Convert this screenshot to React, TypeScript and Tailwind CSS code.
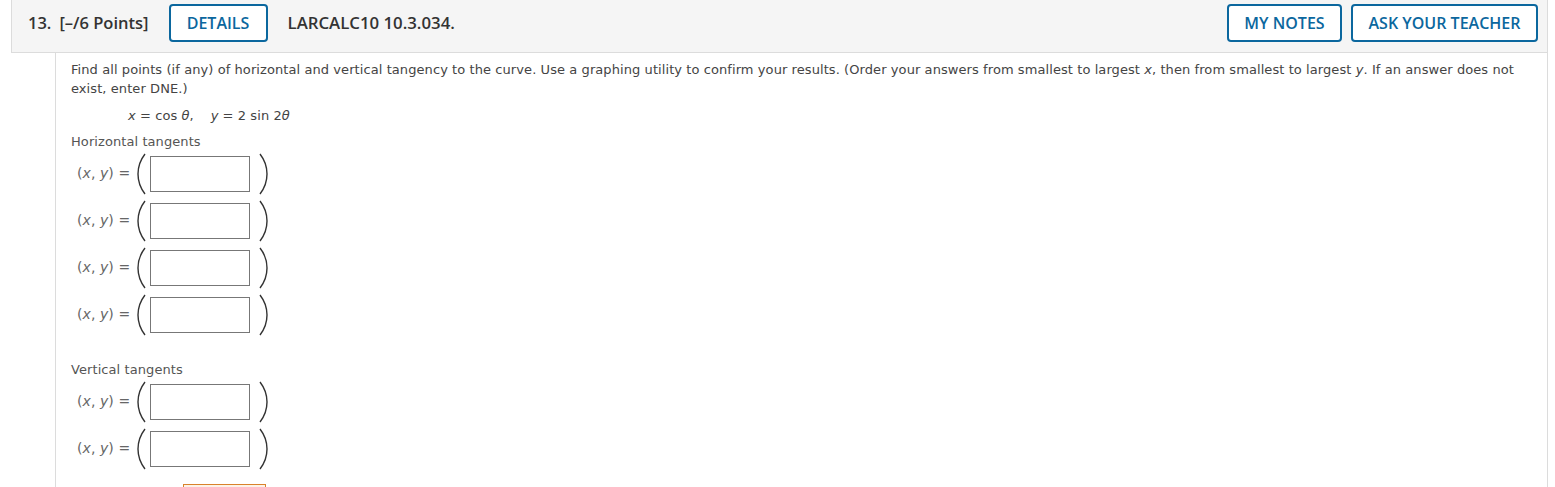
import React from "react";

const LParen = () => (
  <svg width="10" height="42" viewBox="0 0 10 42" className="shrink-0">
    <path d="M8 1 Q1 10 1 21 Q1 32 8 41" fill="none" stroke="#333" strokeWidth="1.4" />
  </svg>
);
const RParen = () => (
  <svg width="10" height="42" viewBox="0 0 10 42" className="shrink-0">
    <path d="M2 1 Q9 10 9 21 Q9 32 2 41" fill="none" stroke="#333" strokeWidth="1.4" />
  </svg>
);

const Row = () => (
  <div className="flex items-center h-[47px]">
    <span className="w-[66px] pl-[6px] text-[14px] text-[#666] whitespace-nowrap">
      (<i>x</i>, <i>y</i>) =
    </span>
    <LParen />
    <div className="w-[100px] h-[36px] border border-[#777] bg-white ml-[3px] mr-[8px]" />
    <RParen />
  </div>
);

export default function App() {
  const btn =
    "border-2 border-[#0b679e] rounded-[4px] text-[#0b679e] font-semibold text-[16px] h-[38px] flex items-center justify-center bg-white";
  return (
    <div className="w-[1555px] h-[487px] overflow-hidden bg-white pl-[11px] pr-[7px]" style={{ fontFamily: "'DejaVu Sans', Verdana, sans-serif" }}>
      <div
        className="bg-[#f5f5f5] border border-t-0 border-[#dcdcdc] flex items-center pt-[4px] pb-[10px] pl-[16px] pr-[9px] text-[#333]"
        style={{ fontFamily: "'Open Sans', sans-serif" }}
      >
        <span className="font-semibold text-[16.5px]">13.</span>
        <span className="font-semibold text-[16.5px] ml-[8px]">[–/6 Points]</span>
        <div className={btn + " w-[99px] ml-[20px]"}>DETAILS</div>
        <span className="font-semibold text-[16.8px] ml-[20px]">LARCALC10 10.3.034.</span>
        <div className="flex-1" />
        <div className={btn + " w-[115px]"}>MY NOTES</div>
        <div className={btn + " w-[187px] ml-[9px]"}>ASK YOUR TEACHER</div>
      </div>
      <div className="ml-[44px] border-l border-r border-[#dcdcdc] h-[440px] pl-[15px] pr-[20px] pt-[7px] text-[13px] text-[#444] tracking-[0.08px]">
        <p className="leading-[19px]">
          Find all points (if any) of horizontal and vertical tangency to the curve. Use a graphing utility to confirm your results. (Order your answers from smallest to largest <i>x</i>, then from smallest to largest <i>y</i>. If an answer does not exist, enter DNE.)
        </p>
        <p className="mt-[8px] pl-[57px] leading-[19px]">
          <i>x</i> = cos <i>θ</i>,&nbsp;&nbsp;&nbsp;&nbsp;<i>y</i> = 2 sin 2<i>θ</i>
        </p>
        <p className="mt-[7px] leading-[19px] text-[#555]">Horizontal tangents</p>
        <div className="mt-[-1px]">
          <Row />
          <Row />
          <Row />
          <Row />
        </div>
        <p className="mt-[22px] leading-[19px] text-[#555]">Vertical tangents</p>
        <div className="mt-[-1px]">
          <Row />
          <Row />
        </div>
        <div className="ml-[112px] mt-[12px] w-[83px] h-[10px] border border-[#d9822b] bg-[#fdf3e8]" />
      </div>
    </div>
  );
}
